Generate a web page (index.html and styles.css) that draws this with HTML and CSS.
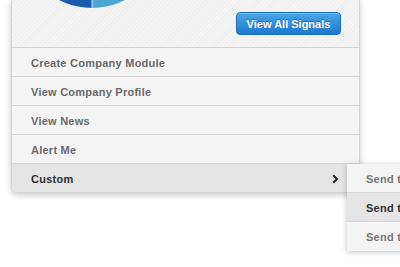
FILE: index.html
```html
<!DOCTYPE html>
<html lang="en">
<head>
    <meta charset="UTF-8">
    <title>Signals Menu</title>
    <link rel="stylesheet" href="styles.css">
</head>
<body>

<div class="page">
    <div class="panel">
        <div class="panel-top">
            <svg class="pie" width="72" height="10" viewBox="-36 63 72 10">
                <path d="M0 0 L0 72 A72 72 0 0 1 -72 0 Z" fill="#1b5cb3"/>
                <path d="M0 0 L72 0 A72 72 0 0 1 0 72 Z" fill="#4aa6d3"/>
                <line x1="0" y1="0" x2="0" y2="80" stroke="#ffffff" stroke-width="0.8"/>
            </svg>
            <button class="btn-signals">View All Signals</button>
        </div>
        <ul class="menu">
            <li>Create Company Module</li>
            <li>View Company Profile</li>
            <li>View News</li>
            <li>Alert Me</li>
            <li class="active">Custom
                <svg class="chev" width="7" height="10" viewBox="0 0 7 10"><path d="M1.2 1.2 L5 5 L1.2 8.8" fill="none" stroke="#222" stroke-width="2"/></svg>
            </li>
        </ul>
    </div>

    <ul class="submenu">
        <li>Send to Watchlist</li>
        <li class="active">Send to Portfolio</li>
        <li>Send to Email</li>
    </ul>
</div>

</body>
</html>
```

FILE: styles.css
```css
body { margin: 0; background: #fff; font-family: "Liberation Sans", Arial, sans-serif; overflow: hidden; }
.page { position: relative; width: 400px; height: 267px; padding-left: 11px; box-sizing: border-box; }
.panel { width: 349px; background: #f4f4f4; border: 1px solid #d4d4d4; border-top: 0; border-radius: 0 0 6px 6px; box-shadow: 0 2px 6px rgba(0, 0, 0, 0.22); overflow: hidden; box-sizing: border-box; }
.panel-top { height: 48px; display: flex; justify-content: space-between; align-items: flex-start; padding-right: 18px; border-bottom: 1px solid #d6d6d6; box-sizing: border-box;
    background: repeating-linear-gradient(135deg, #f4f4f4 0, #f4f4f4 2px, #eeeeee 2px, #eeeeee 3px); }
.pie { display: block; margin-left: 44px; margin-top: -1px; }
.btn-signals { margin-top: 12px; height: 23px; width: 105px; padding: 0; border: 1px solid #1a6cc0; border-radius: 4px; color: #fff; font: bold 11px "Liberation Sans", Arial, sans-serif;
    background: linear-gradient(#4aa5ea, #1d78d0); text-shadow: 0 -1px 0 rgba(0, 0, 0, 0.35); box-shadow: inset 0 1px 0 rgba(255, 255, 255, 0.3); }
.menu, .submenu { list-style: none; margin: 0; padding: 0; }
.menu li { height: 29px; display: flex; align-items: center; padding: 1px 20px 0 19px; border-bottom: 1px solid #d8d8d8; font-size: 11px; font-weight: bold; color: #6a6a6a; letter-spacing: 0.25px; box-sizing: border-box; }
.menu li:last-child { border-bottom: 0; height: 28px; }
.menu li.active { background: #e5e5e5; color: #2e2e2e; justify-content: space-between; }
.chev { display: block; }
.submenu { position: absolute; left: 347px; top: 164px; width: 120px; background: #f4f4f4; box-shadow: 0 1px 6px rgba(0, 0, 0, 0.25); }
.submenu li { height: 29px; display: flex; align-items: center; padding: 1px 0 0 19px; border-bottom: 1px solid #d8d8d8; font-size: 11px; font-weight: bold; color: #767676; letter-spacing: 0.25px; box-sizing: border-box; white-space: nowrap; }
.submenu li:last-child { border-bottom: 0; }
.submenu li.active { background: #e5e5e5; color: #2e2e2e; }
```
